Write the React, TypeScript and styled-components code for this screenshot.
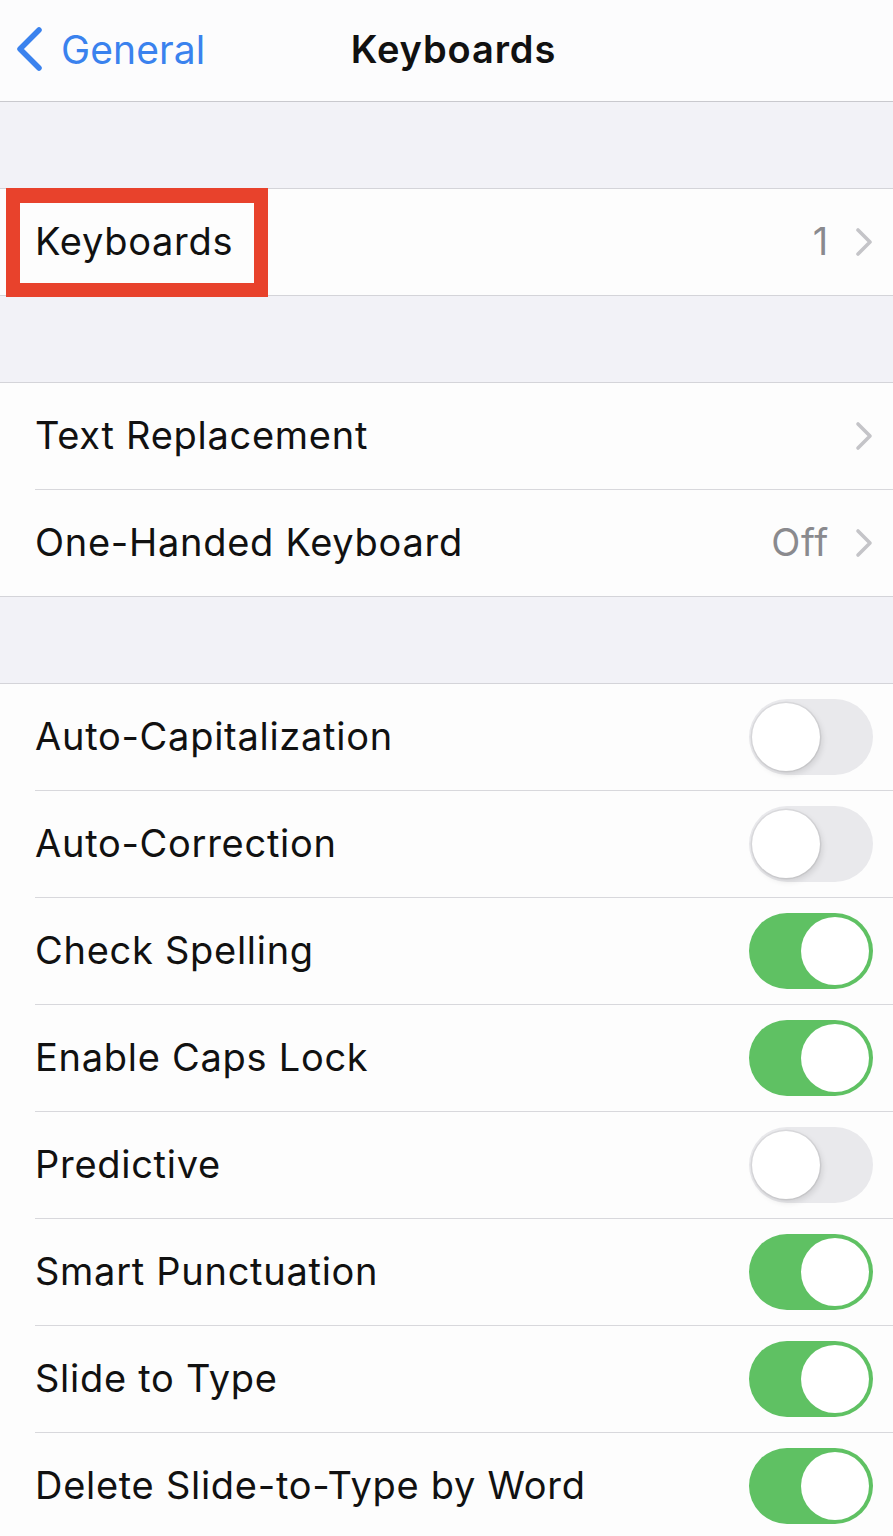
import React from "react";
import styled, { createGlobalStyle } from "styled-components";

const Global = createGlobalStyle`
  html, body { margin: 0; padding: 0; background: #f2f2f7; }
  body { font-family: Inter, "Noto Sans", "Liberation Sans", sans-serif; -webkit-font-smoothing: antialiased; }
  #root { width: 893px; min-height: 1536px; overflow: hidden; }
`;

const Page = styled.div`
  width: 893px;
  height: 1536px;
  background: #f2f2f7;
  display: flex;
  flex-direction: column;
  overflow: hidden;
`;

const NavBar = styled.div`
  height: 101px;
  flex: none;
  background: #fcfcfd;
  border-bottom: 1.5px solid #c9c9ce;
  display: flex;
  align-items: center;
  position: relative;
`;

const Back = styled.div`
  display: flex;
  align-items: center;
  gap: 18px;
  padding-left: 15px;
  color: #3a82ee;
  font-size: 39px;
  letter-spacing: 0.1px;
  margin-top: -3px;
`;

const Title = styled.div`
  position: absolute;
  left: 0;
  right: 0;
  top: 0;
  bottom: 0;
  display: flex;
  align-items: center;
  justify-content: center;
  padding-left: 14px;
  margin-top: -3px;
  font-weight: 600;
  font-size: 38px;
  color: #111;
  letter-spacing: 0.9px;
  pointer-events: none;
`;

const Gap = styled.div`
  height: 86px;
  flex: none;
`;

const Section = styled.div`
  background: #fdfdfd;
  border-top: 1px solid #d4d4d9;
  border-bottom: 1px solid #d4d4d9;
  flex: none;
`;

const Row = styled.div<{ $last?: boolean }>`
  height: 106px;
  margin-left: 35px;
  padding-right: 20px;
  display: flex;
  align-items: center;
  border-bottom: ${(p) => (p.$last ? "none" : "1px solid #d8d8dc")};
  position: relative;
`;

const Label = styled.div`
  flex: 1;
  font-size: 38px;
  color: #111;
  letter-spacing: 0.72px;
  margin-top: -2px;
`;

const Value = styled.div`
  font-size: 38px;
  color: #8a8a8e;
  letter-spacing: 0.7px;
  margin-right: 26px;
  margin-top: -2px;
`;

const Highlight = styled.div`
  position: absolute;
  left: -29px;
  top: -1px;
  width: 262px;
  height: 109px;
  box-sizing: border-box;
  border: 14px solid #e8422c;
  border-top-width: 15px;
  pointer-events: none;
`;

const Track = styled.div<{ $on: boolean }>`
  width: 124px;
  height: 76px;
  border-radius: 38px;
  background: ${(p) => (p.$on ? "#5fc163" : "#e9e9ec")};
  position: relative;
  flex: none;
`;

const Knob = styled.div<{ $on: boolean }>`
  position: absolute;
  top: 4px;
  left: ${(p) => (p.$on ? "52px" : "3px")};
  width: 68px;
  height: 68px;
  border-radius: 50%;
  background: #fff;
  box-shadow: ${(p) =>
    p.$on ? "none" : "0 0 0 1.5px rgba(0,0,0,0.06), 2px 3px 6px rgba(0,0,0,0.12)"};
`;

const Chevron = () => (
  <svg width="18" height="30" viewBox="0 0 18 30">
    <path d="M3 3 L15 15 L3 27" fill="none" stroke="#c4c4c8" strokeWidth="3.6" strokeLinecap="round" strokeLinejoin="round" />
  </svg>
);

const BackChevron = () => (
  <svg width="28" height="46" viewBox="0 0 28 46">
    <path d="M24 4 L5 23 L24 42" fill="none" stroke="#3a82ee" strokeWidth="5.5" strokeLinecap="round" strokeLinejoin="round" />
  </svg>
);

const Toggle = ({ on }: { on: boolean }) => (
  <Track $on={on}>
    <Knob $on={on} />
  </Track>
);

const toggles: [string, boolean][] = [
  ["Auto-Capitalization", false],
  ["Auto-Correction", false],
  ["Check Spelling", true],
  ["Enable Caps Lock", true],
  ["Predictive", false],
  ["Smart Punctuation", true],
  ["Slide to Type", true],
  ["Delete Slide-to-Type by Word", true],
];

export default function App() {
  return (
    <Page>
      <Global />
      <NavBar>
        <Back>
          <BackChevron />
          <span>General</span>
        </Back>
        <Title>Keyboards</Title>
      </NavBar>
      <Gap />
      <Section>
        <Row $last>
          <Highlight />
          <Label>Keyboards</Label>
          <Value>1</Value>
          <Chevron />
        </Row>
      </Section>
      <Gap />
      <Section>
        <Row>
          <Label>Text Replacement</Label>
          <Chevron />
        </Row>
        <Row $last>
          <Label>One-Handed Keyboard</Label>
          <Value>Off</Value>
          <Chevron />
        </Row>
      </Section>
      <Gap />
      <Section>
        {toggles.map(([name, on], i) => (
          <Row key={name} $last={i === toggles.length - 1}>
            <Label>{name}</Label>
            <Toggle on={on} />
          </Row>
        ))}
      </Section>
    </Page>
  );
}
